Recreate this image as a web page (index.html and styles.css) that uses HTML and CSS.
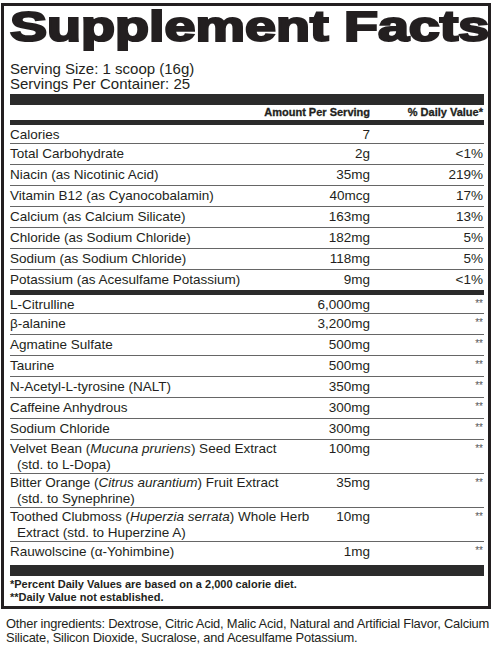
FILE: index.html
```html
<!DOCTYPE html>
<html lang="en">
<head>
    <meta charset="UTF-8">
    <meta name="viewport" content="width=device-width, initial-scale=1.0">
    <title>Supplement Facts</title>
    <link rel="stylesheet" href="styles.css">
</head>
<body>

    <div class="label">
        <h1 class="title">Supplement Facts</h1>
        <div class="serving">
            <div>Serving Size: 1 scoop (16g)</div>
            <div>Servings Per Container: 25</div>
        </div>

        <div class="bar thick"></div>
        <div class="row head">
            <span class="amt wide">Amount Per Serving</span>
            <span class="dv">% Daily Value*</span>
        </div>
        <div class="bar"></div>

        <div class="row first">
            <span class="name">Calories</span>
            <span class="amt">7</span>
            <span class="dv"></span>
        </div>
        <div class="row">
            <span class="name">Total Carbohydrate</span>
            <span class="amt">2g</span>
            <span class="dv">&lt;1%</span>
        </div>
        <div class="row">
            <span class="name">Niacin (as Nicotinic Acid)</span>
            <span class="amt">35mg</span>
            <span class="dv">219%</span>
        </div>
        <div class="row">
            <span class="name">Vitamin B12 (as Cyanocobalamin)</span>
            <span class="amt">40mcg</span>
            <span class="dv">17%</span>
        </div>
        <div class="row">
            <span class="name">Calcium (as Calcium Silicate)</span>
            <span class="amt">163mg</span>
            <span class="dv">13%</span>
        </div>
        <div class="row">
            <span class="name">Chloride (as Sodium Chloride)</span>
            <span class="amt">182mg</span>
            <span class="dv">5%</span>
        </div>
        <div class="row">
            <span class="name">Sodium (as Sodium Chloride)</span>
            <span class="amt">118mg</span>
            <span class="dv">5%</span>
        </div>
        <div class="row">
            <span class="name">Potassium (as Acesulfame Potassium)</span>
            <span class="amt">9mg</span>
            <span class="dv">&lt;1%</span>
        </div>

        <div class="bar"></div>

        <div class="row first">
            <span class="name">L-Citrulline</span>
            <span class="amt">6,000mg</span>
            <span class="dv star">**</span>
        </div>
        <div class="row">
            <span class="name">&beta;-alanine</span>
            <span class="amt">3,200mg</span>
            <span class="dv star">**</span>
        </div>
        <div class="row">
            <span class="name">Agmatine Sulfate</span>
            <span class="amt">500mg</span>
            <span class="dv star">**</span>
        </div>
        <div class="row">
            <span class="name">Taurine</span>
            <span class="amt">500mg</span>
            <span class="dv star">**</span>
        </div>
        <div class="row">
            <span class="name">N-Acetyl-L-tyrosine (NALT)</span>
            <span class="amt">350mg</span>
            <span class="dv star">**</span>
        </div>
        <div class="row">
            <span class="name">Caffeine Anhydrous</span>
            <span class="amt">300mg</span>
            <span class="dv star">**</span>
        </div>
        <div class="row">
            <span class="name">Sodium Chloride</span>
            <span class="amt">300mg</span>
            <span class="dv star">**</span>
        </div>
        <div class="row tall">
            <span class="name">Velvet Bean (<em>Mucuna pruriens</em>) Seed Extract<span class="sub">(std. to L-Dopa)</span></span>
            <span class="amt">100mg</span>
            <span class="dv star">**</span>
        </div>
        <div class="row tall">
            <span class="name">Bitter Orange (<em>Citrus aurantium</em>) Fruit Extract<span class="sub">(std. to Synephrine)</span></span>
            <span class="amt">35mg</span>
            <span class="dv star">**</span>
        </div>
        <div class="row tall">
            <span class="name">Toothed Clubmoss (<em>Huperzia serrata</em>) Whole Herb<span class="sub">Extract (std. to Huperzine A)</span></span>
            <span class="amt">10mg</span>
            <span class="dv star">**</span>
        </div>
        <div class="row">
            <span class="name">Rauwolscine (&alpha;-Yohimbine)</span>
            <span class="amt">1mg</span>
            <span class="dv star">**</span>
        </div>

        <div class="bar thick"></div>
        <div class="notes">
            *Percent Daily Values are based on a 2,000 calorie diet.<br>
            **Daily Value not established.
        </div>
    </div>

    <p class="ingredients">Other ingredients: Dextrose, Citric Acid, Malic Acid, Natural and Artificial Flavor, Calcium Silicate, Silicon Dioxide, Sucralose, and Acesulfame Potassium.</p>

</body>
</html>
```

FILE: styles.css
```css
body {
    margin: 0;
    font-family: "Liberation Sans", Arial, Helvetica, sans-serif;
    color: #231f20;
    background-color: #fff;
}

.label {
    width: 490px;
    margin: 3px 0 0 1px;
    border: 3px solid #231f20;
    padding: 0 4px 2px 6px;
    box-sizing: border-box;
}

.title {
    width: max-content;
    margin: 0;
    font-size: 42px;
    line-height: 42px;
    font-weight: bold;
    white-space: nowrap;
    -webkit-text-stroke: 2.2px #231f20;
    transform: scaleX(1.325);
    transform-origin: left;
}

.serving {
    margin-top: 14px;
    font-size: 15px;
    line-height: 14.5px;
}

.bar {
    height: 5px;
    background-color: #2b2b2b;
}

.bar.thick {
    height: 11px;
    margin-top: 3px;
}

.row {
    display: grid;
    grid-template-columns: 1fr 56px 114px;
    align-items: start;
    font-size: 13.5px;
    line-height: 17px;
    padding: 1px 0 2px;
    border-top: 1px solid #666;
}

.row.first {
    border-top: none;
    padding: 1px 0 0;
}

.row.tall {
    line-height: 16px;
    padding: 1px 0 0;
}

.row.head {
    border-top: none;
    padding: 0;
    font-size: 11px;
    line-height: 15px;
    font-weight: bold;
    -webkit-text-stroke: 0.3px #231f20;
}

.name {
    white-space: nowrap;
}

.sub {
    display: block;
    padding-left: 7px;
}

.amt {
    text-align: right;
    white-space: nowrap;
}

.amt.wide {
    grid-column: 1 / 3;
}

.dv {
    text-align: right;
    padding-right: 1px;
}

.star {
    font-size: 10px;
    line-height: 10px;
    padding-top: 3px;
    color: #555;
}

.notes {
    padding-top: 2px;
    font-size: 11px;
    line-height: 13px;
    font-weight: bold;
}

.ingredients {
    margin: 8px 0 0 6px;
    font-size: 12.9px;
    line-height: 13.5px;
    letter-spacing: -0.2px;
}
```
